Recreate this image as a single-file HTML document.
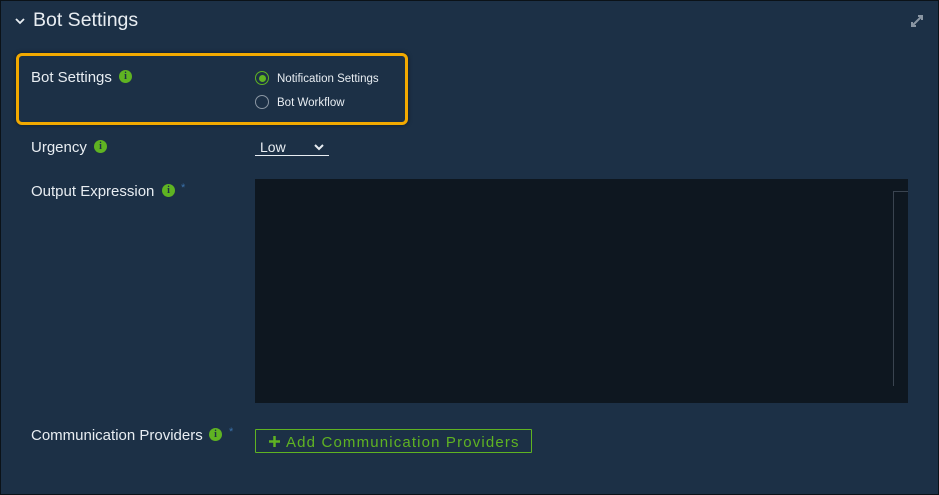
<!DOCTYPE html>
<html><head><style>
body{margin:0;width:939px;height:495px;background:#1c3046;font-family:"Liberation Sans",sans-serif;overflow:hidden;position:relative}
.frame{position:absolute;left:0;top:0;width:937px;height:493px;border:1px solid #0b1218}
.t{position:absolute;color:#e8edf2;white-space:nowrap}
.info{position:absolute;width:13px;height:13px;border-radius:50%;background:#5fb322;color:#1c3046;font:bold 10px "Liberation Serif",serif;text-align:center;line-height:13px}
.star{position:absolute;color:#3a6fa8;font-size:11px}
</style></head><body>
<div class="frame"></div>
<svg style="position:absolute;left:14px;top:16px" width="12" height="10"><path d="M2 3 L6 7 L10 3" stroke="#e8edf2" stroke-width="1.8" fill="none"/></svg>
<div class="t" style="left:33px;top:9px;font-size:19.5px">Bot Settings</div>
<svg style="position:absolute;left:910px;top:14px" width="14" height="14"><path d="M2 12 L12 2 M8 2 H12 V6 M2 8 V12 H6" stroke="#8a96a3" stroke-width="2" fill="none"/></svg>
<div style="position:absolute;left:16px;top:53px;width:386px;height:66px;border:3px solid #f2a900;border-radius:6px;box-shadow:0 0 4px rgba(0,0,0,.5)"></div>
<div class="t" style="left:31px;top:69px;font-size:15px">Bot Settings</div>
<div class="info" style="left:119px;top:70px">i</div>
<div style="position:absolute;left:255px;top:71px;width:12px;height:12px;border:1.5px solid #5fb322;border-radius:50%"></div>
<div style="position:absolute;left:259px;top:75px;width:7px;height:7px;background:#5fb322;border-radius:50%"></div>
<div class="t" style="left:277px;top:73px;font-size:11.5px">Notification Settings</div>
<div style="position:absolute;left:255px;top:95px;width:12px;height:12px;border:1.5px solid #8a96a3;border-radius:50%"></div>
<div class="t" style="left:277px;top:97px;font-size:11.5px">Bot Workflow</div>
<div class="t" style="left:31px;top:139px;font-size:15px">Urgency</div>
<div class="info" style="left:94px;top:140px">i</div>
<div class="t" style="left:260px;top:139px;font-size:14px">Low</div>
<svg style="position:absolute;left:313px;top:143px" width="12" height="8"><path d="M2 2 L6 6 L10 2" stroke="#e8edf2" stroke-width="2" fill="none"/></svg>
<div style="position:absolute;left:255px;top:155px;width:74px;height:1px;background:#e8edf2"></div>
<div class="t" style="left:31px;top:183px;font-size:15px">Output Expression</div>
<div class="info" style="left:162px;top:184px">i</div>
<div class="star" style="left:181px;top:182px">*</div>
<div style="position:absolute;left:255px;top:179px;width:653px;height:224px;background:#0e1720"></div>
<div style="position:absolute;left:893px;top:191px;width:14px;height:194px;border-left:1px solid #3a4450;border-top:1px solid #3a4450"></div>
<div class="t" style="left:31px;top:427px;font-size:15px">Communication Providers</div>
<div class="info" style="left:209px;top:428px">i</div>
<div class="star" style="left:229px;top:426px">*</div>
<div style="position:absolute;left:255px;top:429px;width:275px;height:22px;border:1px solid #5fb322;border-radius:1px"></div>
<svg style="position:absolute;left:268px;top:435px" width="13" height="13"><path d="M6.5 1 V12 M1 6.5 H12" stroke="#5fb322" stroke-width="2.5"/></svg>
<div class="t" style="left:286px;top:434px;font-size:15px;color:#5fb322;letter-spacing:1.15px">Add Communication Providers</div>
</body></html>
